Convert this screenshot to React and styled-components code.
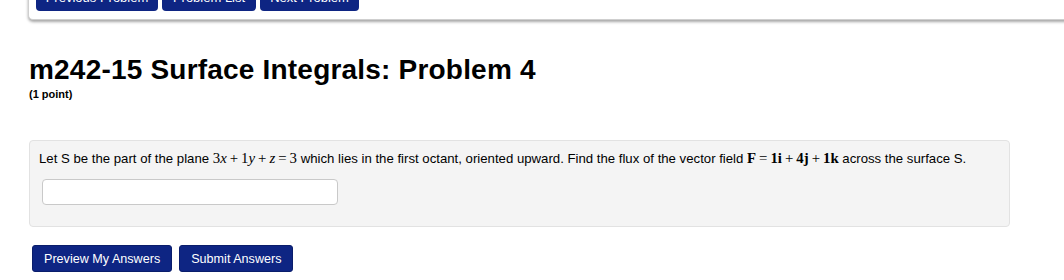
import React from "react";
import styled, { createGlobalStyle } from "styled-components";

const Global = createGlobalStyle`
  body {
    margin: 0;
    background: #ffffff;
    font-family: "Liberation Sans", Arial, sans-serif;
    color: #000;
    overflow: hidden;
  }
`;

const Page = styled.div`
  width: 1064px;
  height: 280px;
  overflow: hidden;
`;

const NavPanel = styled.div`
  display: flex;
  gap: 4px;
  margin: -16px -20px 0 28px;
  padding: 0 0 8px 7px;
  background: #fff;
  border: 1px solid #cfcfcf;
  border-top: none;
  border-radius: 0 0 0 5px;
  box-shadow: 0 2px 3px rgba(0, 0, 0, 0.35);
`;

const NavButton = styled.button`
  height: 27px;
  padding: 0;
  background: #0e2583;
  color: #fff;
  border: none;
  border-radius: 0 0 4px 4px;
  font-family: "Liberation Sans", Arial, sans-serif;
  font-size: 13px;
  display: flex;
  align-items: center;
  justify-content: center;
  width: ${(p) => p.w}px;
`;

const Content = styled.div`
  padding: 34px 56px 0 29px;
`;

const Title = styled.h1`
  margin: 0;
  font-size: 28px;
  font-weight: bold;
  line-height: 32px;
  letter-spacing: 0.2px;
`;

const Points = styled.div`
  font-size: 11px;
  font-weight: bold;
  margin-top: 2px;
`;

const ProblemBox = styled.div`
  margin-top: 40px;
  background: #f4f4f4;
  border: 1px solid #e2e2e2;
  border-radius: 4px;
  padding: 9px 9px 21px 9px;
  width: 961px;
`;

const Statement = styled.p`
  margin: 0;
  font-size: 13.2px;
  line-height: 17px;
`;

const M = styled.span`
  font-family: "Liberation Serif", "Times New Roman", serif;
  font-size: 14.8px;
  font-style: ${(p) => (p.i ? "italic" : "normal")};
  font-weight: ${(p) => (p.b ? "bold" : "normal")};
`;

const Op = styled.span`
  font-family: "Liberation Serif", "Times New Roman", serif;
  font-size: 14.8px;
  margin: 0 3px;
`;

const AnswerInput = styled.input`
  display: block;
  margin: 12px 0 0 3px;
  width: 296px;
  height: 26px;
  box-sizing: border-box;
  border: 1px solid #c9c9c9;
  border-radius: 4px;
  background: #fff;
`;

const Actions = styled.div`
  display: flex;
  gap: 7px;
  margin: 18px 0 0 3px;
`;

const ActionButton = styled.button`
  height: 27px;
  padding: 0 11px;
  background: #0e2583;
  color: #fff;
  border: 1px solid #0a1d6b;
  border-radius: 3px;
  font-family: "Liberation Sans", Arial, sans-serif;
  font-size: 12.6px;
`;

export default function App() {
  return (
    <Page>
      <Global />
      <NavPanel>
        <NavButton w={122}>Previous Problem</NavButton>
        <NavButton w={94}>Problem List</NavButton>
        <NavButton w={99}>Next Problem</NavButton>
      </NavPanel>
      <Content>
        <Title>m242-15 Surface Integrals: Problem 4</Title>
        <Points>(1 point)</Points>
        <ProblemBox>
          <Statement>
            Let S be the part of the plane <M>3</M>
            <M i>x</M>
            <Op>+</Op>
            <M>1</M>
            <M i>y</M>
            <Op>+</Op>
            <M i>z</M>
            <Op>=</Op>
            <M>3</M> which lies in the first octant, oriented upward. Find the
            flux of the vector field <M b>F</M>
            <Op>=</Op>
            <M b>1i</M>
            <Op>+</Op>
            <M b>4j</M>
            <Op>+</Op>
            <M b>1k</M> across the surface S.
          </Statement>
          <AnswerInput type="text" />
        </ProblemBox>
        <Actions>
          <ActionButton>Preview My Answers</ActionButton>
          <ActionButton>Submit Answers</ActionButton>
        </Actions>
      </Content>
    </Page>
  );
}
